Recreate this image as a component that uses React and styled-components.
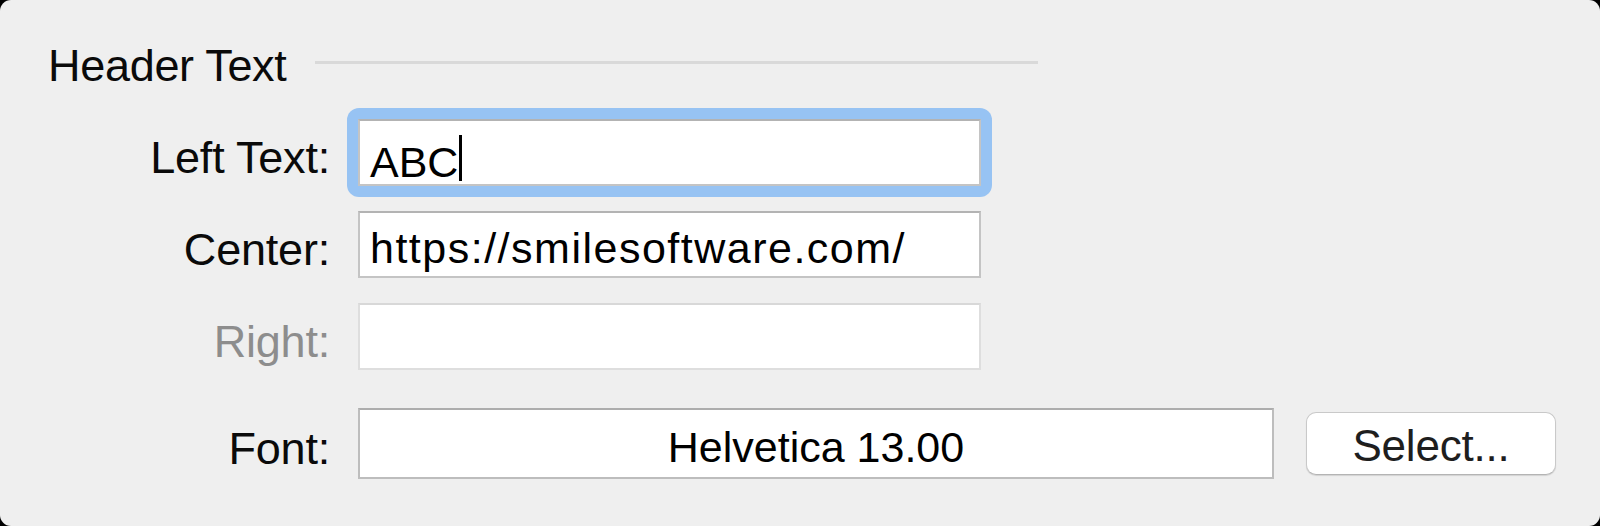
import React from 'react'
import styled, { createGlobalStyle } from 'styled-components'

const GlobalStyle = createGlobalStyle`
  html, body {
    margin: 0;
    padding: 0;
    background: #000;
  }
  body {
    font-family: "Liberation Sans", Helvetica, Arial, sans-serif;
    -webkit-font-smoothing: antialiased;
  }
`

const Panel = styled('div')`
  width: 1600px;
  height: 526px;
  box-sizing: border-box;
  background: #efefef;
  border-radius: 11px;
  padding-top: 43px;
  overflow: hidden;
`

const Header = styled('div')`
  display: flex;
  align-items: flex-start;
  gap: 28px;
  padding-left: 48px;
  height: 45px;
`

const HeaderTitle = styled('div')`
  font-size: 45px;
  line-height: 45px;
  letter-spacing: -0.3px;
  color: #0a0a0a;
  white-space: nowrap;
`

const Rule = styled('div')`
  width: 723px;
  height: 3px;
  margin-top: 18px;
  background: #d9d9d9;
`

const Form = styled('div')`
  display: flex;
  flex-direction: column;
  gap: 25px;
  margin-top: 31px;
`

const Row = styled('div')`
  display: flex;
  align-items: center;
  gap: ${(props) => props.gap || 28}px;
  margin-top: ${(props) => props.offset || 0}px;
`

const Label = styled('div')`
  width: 330px;
  flex: none;
  text-align: right;
  font-size: 45px;
  line-height: 45px;
  padding-top: 9px;
  letter-spacing: -0.2px;
  color: ${(props) => (props.disabled ? '#8d8d8d' : '#0a0a0a')};
  white-space: nowrap;
`

const FocusRing = styled('div')`
  padding: 11px;
  margin: -11px;
  border-radius: 12px;
  background: #97c3f3;
`

const Field = styled('div')`
  box-sizing: border-box;
  width: ${(props) => props.width || 623}px;
  height: ${(props) => props.height || 67}px;
  background: #fff;
  border: 2px solid ${(props) => (props.disabled ? '#dedede' : '#c4c4c4')};
  border-top-color: ${(props) => (props.disabled ? '#d8d8d8' : '#b3b3b3')};
  padding: ${(props) => (props.focused ? '14px 10px 0' : '7px 10px 0')};
  font-size: 43px;
  line-height: ${(props) => (props.focused ? 48 : 56)}px;
  letter-spacing: ${(props) => props.tracking || 0}px;
  color: #000;
  white-space: nowrap;
  text-align: ${(props) => (props.center ? 'center' : 'left')};
`

const FontField = styled(Field)`
  line-height: 60px;
  border-color: #bdbdbd;
  border-top-color: #adadad;
`

const Caret = styled('span')`
  display: inline-block;
  width: 3px;
  height: 46px;
  margin-left: 1px;
  background: #000;
  vertical-align: -4px;
`

const SelectButton = styled('button')`
  box-sizing: border-box;
  width: 250px;
  height: 63px;
  padding: 5px 0 0;
  background: #fff;
  border: 1px solid #c9c9c9;
  border-bottom-color: #b4b4b4;
  border-radius: 10px;
  box-shadow: 0 1px 1px rgba(0, 0, 0, 0.12);
  font-family: "Liberation Sans", Helvetica, Arial, sans-serif;
  font-size: 44px;
  line-height: 44px;
  letter-spacing: -0.2px;
  color: #1e1e1e;
  text-align: center;
`

const App = () => {
  return (
    <>
      <GlobalStyle />
      <Panel>
        <Header>
          <HeaderTitle>Header Text</HeaderTitle>
          <Rule />
        </Header>
        <Form>
          <Row>
            <Label>Left Text:</Label>
            <FocusRing>
              <Field focused>ABC<Caret /></Field>
            </FocusRing>
          </Row>
          <Row>
            <Label>Center:</Label>
            <Field tracking={1.5}>https://smilesoftware.com/</Field>
          </Row>
          <Row>
            <Label disabled>Right:</Label>
            <Field disabled />
          </Row>
          <Row offset={13}>
            <Label>Font:</Label>
            <Row gap={32}>
              <FontField width={916} height={71} center>Helvetica 13.00</FontField>
              <SelectButton>Select...</SelectButton>
            </Row>
          </Row>
        </Form>
      </Panel>
    </>
  )
}

export default App
